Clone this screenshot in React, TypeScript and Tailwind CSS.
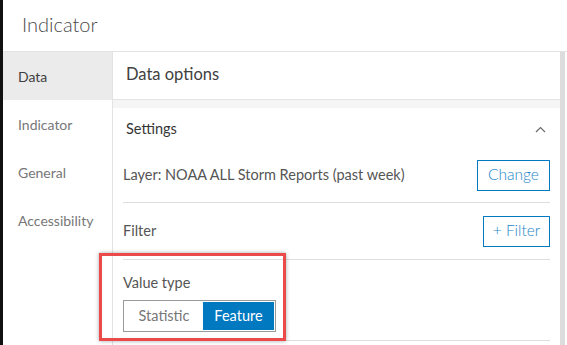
const NAV = ["Data", "Indicator", "General", "Accessibility"];

function ChevronUp() {
  return (
    <svg width="11" height="7" viewBox="0 0 11 7" fill="none">
      <path d="M1 6 L5.5 1.5 L10 6" stroke="#6b6b6b" strokeWidth="1.2" />
    </svg>
  );
}

export default function App() {
  return (
    <div className="relative flex h-[345px] w-[567px] overflow-hidden bg-white font-['Lato',sans-serif] text-[#555]">
      <div className="w-[3px] shrink-0 bg-[#111]" />

      <div className="flex flex-1 flex-col">
        <header className="flex h-[52px] shrink-0 items-center border-b border-[#e3e3e3] pb-[4px] pl-[19px] text-[20px] font-light text-[#4a4a4a]">
          Indicator
        </header>

        <div className="flex flex-1">
          <nav className="w-[110px] shrink-0 border-r border-[#e3e3e3]">
            {NAV.map((n, i) => (
              <div
                key={n}
                className={
                  i === 0
                    ? "flex h-[48px] items-center bg-[#ebebeb] pl-[15px] text-[14px] text-[#404040]"
                    : "flex h-[48px] items-center pl-[15px] text-[14px] text-[#777]"
                }
              >
                {n}
              </div>
            ))}
          </nav>

          <main className="flex flex-1 flex-col">
            <div className="flex h-[48px] shrink-0 items-center border-b border-[#e3e3e3] pb-[2px] pl-[13px] text-[16.5px] text-[#404040]">
              Data options
            </div>
            <div className="h-[8px] shrink-0 bg-[#f5f5f5]" />

            <div className="flex flex-col pl-[10px] pr-[10px]">
              <div className="flex h-[42px] items-center justify-between pl-[3px] pr-[4px]">
                <span className="text-[14.5px] text-[#353535]">Settings</span>
                <ChevronUp />
              </div>

              <div className="flex h-[53px] items-center justify-between border-b border-[#dedede] pb-[2px]">
                <span className="text-[14.5px]">Layer: NOAA ALL Storm Reports (past week)</span>
                <button className="h-[31px] w-[73px] border border-[#0079c1] bg-white text-[15.5px] font-light text-[#1a85c8]">
                  Change
                </button>
              </div>

              <div className="flex h-[57px] items-center justify-between border-b border-[#dedede]">
                <span className="text-[14.5px]">Filter</span>
                <button className="h-[31px] w-[67px] border border-[#0079c1] bg-white text-[15.5px] font-light text-[#1a85c8]">
                  + Filter
                </button>
              </div>

              <div className="flex h-[81px] flex-col border-b border-[#dedede] pt-[12px]">
                <span className="text-[14.5px]">Value type</span>
                <div className="mt-[6px] flex h-[32px] w-[153px] border border-[#9a9a9a] p-px text-[14.5px]">
                  <div className="flex w-[78px] items-center justify-center text-[#777]">
                    Statistic
                  </div>
                  <div className="flex flex-1 items-center justify-center bg-[#0079c1] text-white">
                    Feature
                  </div>
                </div>
              </div>
            </div>
          </main>

          <div className="w-[5px] shrink-0 bg-[#dcdcdc]" />
          <div className="w-[2px] shrink-0" />
        </div>
      </div>

      <div className="absolute left-[99px] top-[253px] h-[88px] w-[187px] border-[3px] border-[#ea4a4a] shadow-[0_0_4px_rgba(0,0,0,0.35)]" />
    </div>
  );
}
